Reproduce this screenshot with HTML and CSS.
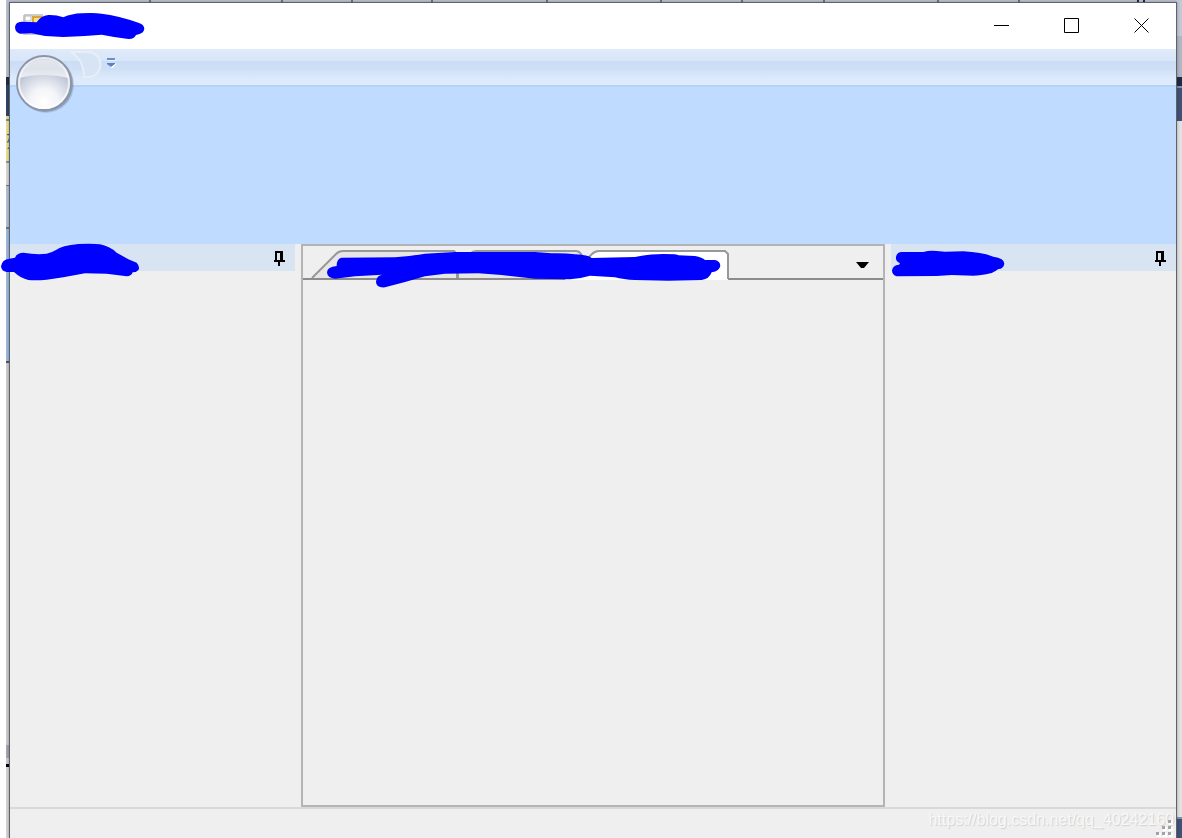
FILE: index.html
```
<!DOCTYPE html>
<html lang="en">
<head>
    <meta charset="UTF-8">
    <title>MainForm</title>
    <link rel="stylesheet" href="styles.css">
</head>
<body>
<div class="behind behind-top"></div>
<div class="behind behind-left"><span>列</span></div>
<div class="behind behind-right"></div>
<div class="window">
    <div class="titlebar">
        <svg class="app-icon" width="20" height="22" viewBox="0 0 20 22">
            <path d="M1 1H20M1 20H20M1 1V21" fill="none" stroke="#ccc" stroke-width="2"/>
            <rect x="2" y="2" width="6" height="5" fill="#fff" stroke="#b5b5b5"/>
            <rect x="10" y="3" width="10" height="8" fill="#fbe08a" stroke="#d6a63a" stroke-width="2"/>
        </svg>
        <svg class="mark mark-title" width="130" height="28" viewBox="45 36 390 84">
            <path d="M45 82Q46 66 65 65L110 67Q122 47 145 45Q168 44 190 52Q215 41 245 40Q280 37 305 41Q355 47 415 68Q432 73 433 86Q432 100 408 105Q402 118 385 117Q345 112 305 104L255 108L190 111L135 108L95 100L60 101Q46 98 45 82Z"/>
        </svg>
        <button class="win-btn" type="button" aria-label="Minimize">
            <svg width="15" height="15" viewBox="0 0 15 15"><path d="M0 7.5H15"/></svg>
        </button>
        <button class="win-btn" type="button" aria-label="Maximize">
            <svg width="15" height="15" viewBox="0 0 15 15"><path d="M.5 .5H14.5V14.5H.5Z"/></svg>
        </button>
        <button class="win-btn" type="button" aria-label="Close">
            <svg width="15" height="15" viewBox="0 0 15 15"><path d="M.5 .5L14.5 14.5M14.5 .5L.5 14.5"/></svg>
        </button>
    </div>
    <div class="quickbar">
        <button class="orb" type="button" aria-label="Menu">
            <svg width="60" height="60" viewBox="0 0 60 60">
                <defs>
                    <linearGradient id="orbTop" x1="0" y1="0" x2="0" y2="1">
                        <stop offset="0" stop-color="#e4e7ed"/>
                        <stop offset="0.5" stop-color="#dde1e9"/>
                        <stop offset="1" stop-color="#eceef3"/>
                    </linearGradient>
                    <radialGradient id="orbBottom" cx="0.5" cy="0.85" r="0.65">
                        <stop offset="0" stop-color="#ffffff"/>
                        <stop offset="0.4" stop-color="#f3f4f8"/>
                        <stop offset="0.8" stop-color="#cbd1de"/>
                        <stop offset="1" stop-color="#b4bdcf"/>
                    </radialGradient>
                </defs>
                <circle cx="31" cy="31" r="28" fill="#56627a" opacity=".2"/>
                <circle cx="30" cy="30" r="28" fill="#56627a" opacity=".4"/>
                <circle cx="29" cy="29" r="27" fill="url(#orbBottom)" stroke="#8c96a8" stroke-width="2"/>
                <path d="M4 24A26 26 0 0 1 54 24Q42 21 29 21Q15 21 4 24Z" fill="url(#orbTop)"/>
                <circle cx="29" cy="29" r="25" fill="none" stroke="#fff" stroke-opacity=".7" stroke-width="2"/>
            </svg>
        </button>
        <svg class="crescent" width="32" height="28" viewBox="0 0 32 28">
            <path d="M1 1H18A12 12 0 0 1 18 26H14Q14 9 1 1Z"/>
        </svg>
        <button class="customize" type="button" aria-label="Customize toolbar">
            <svg width="9" height="10" viewBox="0 0 9 10">
                <path d="M1 2H9M1 6H9L5 10Z" stroke="#fff" fill="#fff"/>
                <path d="M0 1H8" stroke="#6b8fc4" stroke-width="2"/>
                <path d="M0 5H8V6L4 9L0 6Z" fill="#5c85c0"/>
            </svg>
        </button>
    </div>
    <div class="ribbon"></div>
    <div class="main">
        <div class="panel">
            <div class="panel-head">
                <svg class="mark mark-left" width="140" height="38" viewBox="0 54 420 114">
                    <path d="M3 124Q6 103 28 101L45 98Q50 84 70 83Q110 90 140 86Q158 81 168 75Q185 62 235 57Q280 55 300 58Q328 63 350 83L385 103L410 113Q420 124 416 134Q410 142 398 142Q395 153 380 154L320 146L255 145L190 157L140 164Q110 167 85 165Q62 160 42 141H20Q4 139 3 124Z"/>
                </svg>
                <button class="pin" type="button" aria-label="Auto hide">
                    <svg width="11" height="15" viewBox="0 0 11 15">
                        <path d="M1 0H9V9H11V11H6V15H4V11H0V9H1ZM3 2V9H6V2Z" fill-rule="evenodd"/>
                    </svg>
                </button>
            </div>
        </div>
        <div class="docs">
            <div class="tabs">
                <button class="tab tab-first" type="button" aria-label="Tab 1">
                    <svg width="147" height="28" viewBox="0 0 147 28">
                        <path class="tab-line" d="M1 28L25 4Q28 1 32 1H143L146 4V28"/>
                    </svg>
                </button>
                <button class="tab" type="button" aria-label="Tab 2">
                    <svg width="124" height="28" viewBox="0 0 124 28">
                        <path class="tab-line" d="M0 28V18L12 4Q15 1 18 1H118Q121 1 123 4V28"/>
                    </svg>
                </button>
                <button class="tab tab-active" type="button" aria-label="Tab 3">
                    <svg width="165" height="30" viewBox="0 0 165 30">
                        <path fill="#fff" d="M0 30L25 5Q28 1 33 1H160L163 4V30Z"/>
                        <path class="tab-line" d="M23 8L27 4Q30 1 34 1H160L163 4V29"/>
                    </svg>
                </button>
                <button class="tab-list" type="button" aria-label="Open documents">
                    <svg width="13" height="7" viewBox="0 0 13 7"><path d="M0 0H13L8 6H5Z"/></svg>
                </button>
                <svg class="mark mark-tabs" width="395" height="38" viewBox="93 48 1185 114">
                    <path d="M96 112Q97 95 125 93Q125 70 140 68L300 67Q345 64 390 56L480 51H720L770 55Q810 54 840 58Q880 60 890 69L1020 66Q1060 57 1105 57Q1150 57 1150 61L1200 63Q1222 67 1230 75H1260Q1275 78 1276 92Q1274 107 1250 112Q1243 132 1220 135L1120 137L1020 135Q985 134 960 127L885 122Q855 131 825 133L720 131L620 120L550 115L450 116L390 124L330 141L270 157Q243 159 243 140Q245 121 262 119L180 124L120 131Q97 130 96 112Z"/>
                </svg>
            </div>
        </div>
        <div class="panel">
            <div class="panel-head">
                <svg class="mark mark-right" width="114" height="27" viewBox="183 45 342 81">
                    <path d="M186 107Q188 90 207 89L210 84Q196 80 198 66Q201 51 215 51H280Q300 45 320 48L345 50L400 49Q460 53 490 65Q523 69 523 86Q521 101 505 102Q495 110 485 114Q450 122 430 122L365 120L320 123L200 124Q187 120 186 107Z"/>
                </svg>
                <button class="pin" type="button" aria-label="Auto hide">
                    <svg width="11" height="15" viewBox="0 0 11 15">
                        <path d="M1 0H9V9H11V11H6V15H4V11H0V9H1ZM3 2V9H6V2Z" fill-rule="evenodd"/>
                    </svg>
                </button>
            </div>
        </div>
    </div>
    <div class="status">
        <span class="watermark">https://blog.csdn.net/qq_40242160</span>
        <svg class="grip" width="17" height="17" viewBox="0 0 17 17">
            <path fill="#fff" d="M13 1h4v4h-4zM7 7h4v4h-4zM13 7h4v4h-4zM1 13h4v4h-4zM7 13h4v4h-4zM13 13h4v4h-4z"/>
            <path fill="#a3a3a3" d="M12 0h3v3h-3zM6 6h3v3h-3zM12 6h3v3h-3zM0 12h3v3h-3zM6 12h3v3h-3zM12 12h3v3h-3z"/>
        </svg>
    </div>
</div>
</body>
</html>
```
FILE: styles.css
```
* {
    padding: 0;
    margin: 0;
    box-sizing: border-box;
}

body {
    min-height: 100vh;
    padding: 2px 5px 0 9px;
    display: flex;
    position: relative;
    overflow: hidden;
    background: #fff;
    font-family: "Liberation Sans", "Noto Sans CJK SC", sans-serif;
}

button {
    border: 0;
    background: none;
    cursor: pointer;
}

svg {
    display: block;
}

/* what shows around the window edges */
.behind {
    position: absolute;
    overflow: hidden;
}

.behind-top {
    left: 6px;
    right: 0;
    top: 0;
    height: 3px;
    background:
        linear-gradient(#1c2a44, #1c2a44) 1131px 0 / 2px 3px no-repeat,
        linear-gradient(#1c2a44, #1c2a44) 1137px 0 / 2px 3px no-repeat,
        linear-gradient(#6b7382, #6b7382) 143px 0 / 2px 3px no-repeat,
        linear-gradient(#6b7382, #6b7382) 275px 0 / 2px 3px no-repeat,
        linear-gradient(#6b7382, #6b7382) 345px 0 / 2px 3px no-repeat,
        linear-gradient(#6b7382, #6b7382) 425px 0 / 2px 3px no-repeat,
        linear-gradient(#6b7382, #6b7382) 540px 0 / 2px 3px no-repeat,
        linear-gradient(#6b7382, #6b7382) 654px 0 / 2px 3px no-repeat,
        linear-gradient(#6b7382, #6b7382) 735px 0 / 2px 3px no-repeat,
        linear-gradient(#6b7382, #6b7382) 817px 0 / 2px 3px no-repeat,
        linear-gradient(#6b7382, #6b7382) 931px 0 / 2px 3px no-repeat,
        linear-gradient(#6b7382, #6b7382) 1012px 0 / 2px 3px no-repeat,
        #bcc2d0;
}

.behind-left {
    left: 6px;
    top: 0;
    bottom: 0;
    width: 4px;
    background: linear-gradient(#bcc2cf 77px, #1f2d47 77px, #1f2d47 85px, #2f4567 85px, #2f4567 116px, #e8e28f 116px, #e8e28f 119px, #7d8794 119px, #7d8794 121px, #e8e28f 121px, #e8e28f 161px, #8c94a3 161px, #8c94a3 163px, #d8d8d8 163px, #d8d8d8 185px, #777 185px, #777 186px, #b4c3d4 186px, #b4c3d4 227px, #777 227px, #777 229px, #9dbbe2 229px, #9dbbe2 361px, #555 361px, #555 363px, #cdcdcd 363px, #cdcdcd 745px, #a5a8b0 745px, #a5a8b0 758px, #cdcdcd 758px, #cdcdcd 764px, #000 764px, #000 767px, #d6d6d6 767px);
}

.behind-left span {
    display: block;
    padding-top: 132px;
    font-size: 16px;
    line-height: 20px;
    color: #1464b8;
}

.behind-right {
    right: 0;
    top: 0;
    bottom: 0;
    width: 6px;
    background: linear-gradient(#c3c8d7 36px, #b0b6c5 36px, #b0b6c5 77px, #1c2b46 77px, #1c2b46 86px, #8290a8 86px, #8290a8 88px, #3f5276 88px, #3f5276 121px, #e2e2e2 121px, #e2e2e2 817px, #8290a8 817px, #8290a8 819px, #3f5276 819px);
}

.window {
    flex: 1;
    display: flex;
    flex-direction: column;
    position: relative;
    border: 1px solid #5f6369;
    border-bottom: 0;
    box-shadow: 0 0 3px rgba(0, 0, 0, .3);
    background: #efefef;
}

.mark {
    position: absolute;
    z-index: 2;
    fill: #0000ff;
    pointer-events: none;
}

.titlebar {
    height: 46px;
    display: flex;
    justify-content: flex-end;
    position: relative;
    background: #fff;
}

.app-icon {
    margin: 11px auto 0 13px;
}

.mark-title {
    left: 5px;
    top: 9px;
}

.win-btn {
    width: 70px;
    padding-bottom: 2px;
    display: flex;
    align-items: center;
    justify-content: center;
}

.win-btn path {
    fill: none;
    stroke: #000;
}

.quickbar {
    height: 36px;
    display: flex;
    align-items: flex-start;
    position: relative;
    padding: 2px 0 0 60px;
    background: linear-gradient(#dfeafa 0, #d8e6f9 12px, #cbdcf5 12px, #cfe0f6 20px, #dceafc 30px, #dfebfb 36px);
}

.orb {
    position: absolute;
    left: 5px;
    top: 5px;
    z-index: 1;
}

.crescent path {
    fill: #d7e4f5;
    stroke: #e8eef6;
    stroke-width: 2;
}

.customize {
    padding: 7px 5px;
}

.ribbon {
    height: 159px;
    border-top: 2px solid #b5d2f8;
    background: #bfdbff;
}

.main {
    flex: 1;
    display: grid;
    grid-template-columns: 285px 1fr 285px;
    gap: 6px;
}

.panel-head {
    height: 27px;
    display: flex;
    justify-content: flex-end;
    position: relative;
    background: #d8e4f1;
}

.pin {
    padding: 2px 10px 0;
}

.mark-left {
    left: -10px;
    top: -1px;
}

.mark-right {
    left: 0;
    top: 6px;
}

.docs {
    border: 2px solid #b4b4b4;
}

.tabs {
    height: 34px;
    display: flex;
    align-items: flex-start;
    position: relative;
    padding: 4px 14px 0 8px;
    background: linear-gradient(#8c8c8c, #8c8c8c) 0 100% / 100% 2px no-repeat;
}

.tab-line {
    fill: #e6e6e6;
    stroke: #989898;
    stroke-width: 2;
}

.tab-active {
    margin-left: -17px;
}

.tab-active .tab-line {
    fill: none;
}

.tab-list {
    margin-left: auto;
    padding-top: 12px;
}

.mark-tabs {
    left: 23px;
    top: 5px;
}

.status {
    height: 31px;
    display: flex;
    justify-content: flex-end;
    position: relative;
    border-top: 2px solid #d9d9d9;
}

.watermark {
    padding: 1px 2px 0 0;
    font-size: 16px;
    line-height: 20px;
    color: #f8f8f8;
    text-shadow: 1px 1px 1px #d0d0d0;
}

.grip {
    position: absolute;
    right: 3px;
    bottom: 1px;
}
```
